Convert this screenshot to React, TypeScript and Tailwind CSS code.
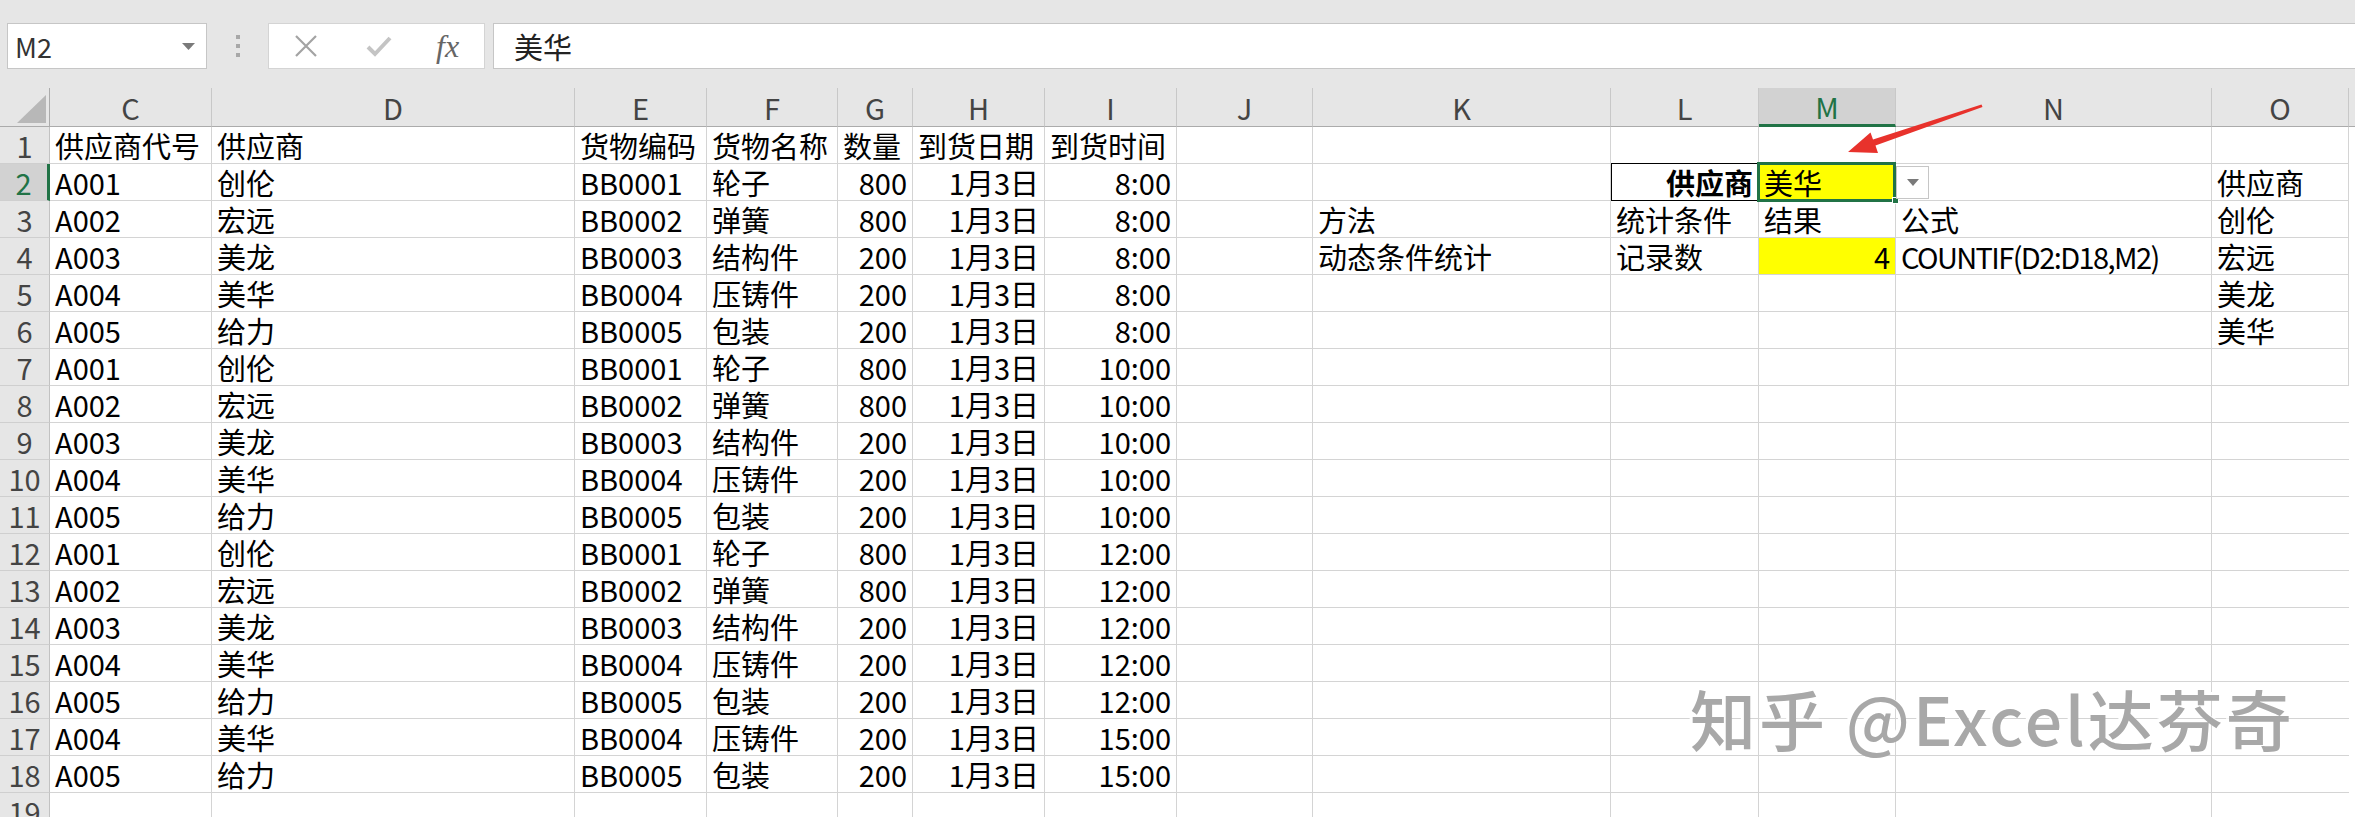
import React from "react";

type Col = { key: string; w: string };

const cols: Col[] = [
  { key: "C", w: "w-[162px]" },
  { key: "D", w: "w-[363px]" },
  { key: "E", w: "w-[132px]" },
  { key: "F", w: "w-[131px]" },
  { key: "G", w: "w-[75px]" },
  { key: "H", w: "w-[132px]" },
  { key: "I", w: "w-[132px]" },
  { key: "J", w: "w-[136px]" },
  { key: "K", w: "w-[298px]" },
  { key: "L", w: "w-[148px]" },
  { key: "M", w: "w-[137px]" },
  { key: "N", w: "w-[316px]" },
  { key: "O", w: "w-[137px]" },
];

const records: [string, string, string, string, string, string][] = [
  ["A001", "创伦", "BB0001", "轮子", "800", "8:00"],
  ["A002", "宏远", "BB0002", "弹簧", "800", "8:00"],
  ["A003", "美龙", "BB0003", "结构件", "200", "8:00"],
  ["A004", "美华", "BB0004", "压铸件", "200", "8:00"],
  ["A005", "给力", "BB0005", "包装", "200", "8:00"],
  ["A001", "创伦", "BB0001", "轮子", "800", "10:00"],
  ["A002", "宏远", "BB0002", "弹簧", "800", "10:00"],
  ["A003", "美龙", "BB0003", "结构件", "200", "10:00"],
  ["A004", "美华", "BB0004", "压铸件", "200", "10:00"],
  ["A005", "给力", "BB0005", "包装", "200", "10:00"],
  ["A001", "创伦", "BB0001", "轮子", "800", "12:00"],
  ["A002", "宏远", "BB0002", "弹簧", "800", "12:00"],
  ["A003", "美龙", "BB0003", "结构件", "200", "12:00"],
  ["A004", "美华", "BB0004", "压铸件", "200", "12:00"],
  ["A005", "给力", "BB0005", "包装", "200", "12:00"],
  ["A004", "美华", "BB0004", "压铸件", "200", "15:00"],
  ["A005", "给力", "BB0005", "包装", "200", "15:00"],
];

type Cell = {
  t: string;
  right?: boolean;
  bold?: boolean;
  yellow?: boolean;
  boxed?: boolean;
  selected?: boolean;
  tight?: boolean;
};

const extras: Record<string, Cell> = {
  L2: { t: "供应商", right: true, bold: true, boxed: true },
  M2: { t: "美华", yellow: true, selected: true },
  O2: { t: "供应商" },
  K3: { t: "方法" },
  L3: { t: "统计条件" },
  M3: { t: "结果" },
  N3: { t: "公式" },
  O3: { t: "创伦" },
  K4: { t: "动态条件统计" },
  L4: { t: "记录数" },
  M4: { t: "4", right: true, yellow: true },
  N4: { t: "COUNTIF(D2:D18,M2)", tight: true },
  O4: { t: "宏远" },
  O5: { t: "美龙" },
  O6: { t: "美华" },
};

function getCell(row: number, key: string): Cell | undefined {
  if (row === 1) {
    const head: Record<string, string> = {
      C: "供应商代号",
      D: "供应商",
      E: "货物编码",
      F: "货物名称",
      G: "数量",
      H: "到货日期",
      I: "到货时间",
    };
    if (head[key]) return { t: head[key] };
  }
  const r = records[row - 2];
  if (r) {
    const map: Record<string, Cell> = {
      C: { t: r[0] },
      D: { t: r[1] },
      E: { t: r[2] },
      F: { t: r[3] },
      G: { t: r[4], right: true },
      H: { t: "1月3日", right: true },
      I: { t: r[5], right: true },
    };
    if (map[key]) return map[key];
  }
  return extras[`${key}${row}`];
}

function FormulaBar() {
  return (
    <div className="flex h-[70px] items-start bg-[#e6e6e6] pt-[23px]">
      <div className="ml-[7px] flex h-[46px] w-[200px] items-center justify-between border border-[#c6c6c6] bg-white pl-[7px] pr-[11px]">
        <span className="text-[27px] leading-none text-[#333]">M2</span>
        <svg width="13" height="7" viewBox="0 0 13 7">
          <polygon points="0,0 13,0 6.5,7" fill="#7a7a7a" />
        </svg>
      </div>
      <div className="flex h-[46px] w-[61px] items-center justify-center">
        <svg width="4" height="22" viewBox="0 0 4 22">
          <rect x="0" y="0" width="4" height="4" fill="#a8a8a8" />
          <rect x="0" y="9" width="4" height="4" fill="#a8a8a8" />
          <rect x="0" y="18" width="4" height="4" fill="#a8a8a8" />
        </svg>
      </div>
      <div className="flex h-[46px] w-[217px] items-center border border-[#d4d4d4] bg-white">
        <svg className="ml-[25px]" width="24" height="22" viewBox="0 0 24 22">
          <path d="M2 1 L22 21 M22 1 L2 21" stroke="#a3a3a3" strokeWidth="2.2" fill="none" />
        </svg>
        <svg className="ml-[48px]" width="26" height="22" viewBox="0 0 26 22">
          <path d="M2 12 L9 19 L24 3" stroke="#c4c4c4" strokeWidth="4" fill="none" />
        </svg>
        <span className="ml-[44px] font-['Liberation_Serif',serif] text-[32px] italic leading-none text-[#666]">fx</span>
      </div>
      <div className="ml-[8px] flex h-[46px] flex-1 items-center border-y border-l border-[#c6c6c6] bg-white pl-[20px]">
        <span className="text-[29px] leading-none text-[#222]">美华</span>
      </div>
    </div>
  );
}

function HeaderRow() {
  return (
    <div className="flex h-[39px] bg-[#e6e6e6]">
      <div className="relative h-full w-[50px] shrink-0 border-b border-r border-[#ababab]">
        <svg className="absolute left-0 top-0" width="50" height="39" viewBox="0 0 50 39">
          <polygon points="46,7 46,35 17,35" fill="#b8b8b8" />
        </svg>
      </div>
      {cols.map((c) =>
        c.key === "M" ? (
          <div
            key={c.key}
            className={`${c.w} h-full shrink-0 border-b-[3px] border-r border-b-[#217346] border-r-[#c8c8c8] bg-[#d2d2d2] text-center leading-[37px] text-[#217346]`}
          >
            {c.key}
          </div>
        ) : (
          <div
            key={c.key}
            className={`${c.w} h-full shrink-0 border-b border-r border-b-[#ababab] border-r-[#c8c8c8] text-center leading-[38px] text-[#444]`}
          >
            {c.key}
          </div>
        ),
      )}
      <div className="h-full flex-1 border-b border-[#ababab]" />
    </div>
  );
}

function DataCell({ col, row }: { col: Col; row: number }) {
  const cell = getCell(row, col.key);
  const noRight = col.key === "O" && row > 7;
  const base = `${col.w} relative h-[37px] shrink-0 border-b border-[#d4d4d4] whitespace-nowrap leading-[36px] text-black`;
  const right = noRight ? "" : "border-r";
  const align = cell?.right ? "pr-[5px] text-right" : "pl-[5px]";
  const bg = cell?.yellow ? "bg-[#ffff00]" : "bg-white";
  const weight = cell?.bold ? "font-bold" : "";
  const track = cell?.tight ? "tracking-[-1.6px]" : "";
  return (
    <div className={`${base} ${right} ${align} ${bg} ${weight} ${track} ${cell?.selected ? "z-10" : ""}`}>
      {cell?.boxed && <div className="absolute inset-x-0 bottom-[-1px] top-[-1px] border border-black" />}
      <span className="relative">{cell?.t}</span>
      {cell?.selected && (
        <>
          <div className="absolute bottom-[-2px] left-[-2px] right-[-1px] top-[-2px] border-[3px] border-[#217346]" />
          <div className="absolute bottom-[-4px] right-[-4px] h-[7px] w-[7px] border border-white bg-[#217346]" />
          <div className="absolute left-[calc(100%+1px)] top-[2px] flex h-[33px] w-[33px] items-center justify-center border border-[#c6c6c6] bg-white">
            <svg width="12" height="7" viewBox="0 0 12 7">
              <polygon points="0,0 12,0 6,7" fill="#7a7a7a" />
            </svg>
          </div>
        </>
      )}
    </div>
  );
}

function Row({ row }: { row: number }) {
  const active = row === 2;
  return (
    <div className="flex h-[37px]">
      <div
        className={`h-[37px] w-[50px] shrink-0 border-b border-b-[#cfcfcf] text-center leading-[36px] ${
          active
            ? "border-r-[3px] border-r-[#217346] bg-[#d2d2d2] text-[#217346]"
            : "border-r border-r-[#c2c2c2] bg-[#e6e6e6] text-[#444]"
        }`}
      >
        {row}
      </div>
      {cols.map((c) => (
        <DataCell key={c.key} col={c} row={row} />
      ))}
      <div className="h-[37px] flex-1 bg-white" />
    </div>
  );
}

export default function App() {
  const rows = Array.from({ length: 19 }, (_, i) => i + 1);
  return (
    <div className="relative h-[817px] w-[2355px] overflow-hidden bg-white font-['Noto_Sans_CJK_SC',sans-serif] text-[29px]">
      <FormulaBar />
      <div className="h-[18px] bg-[#e6e6e6]" />
      <HeaderRow />
      {rows.map((r) => (
        <Row key={r} row={r} />
      ))}

      <svg className="pointer-events-none absolute left-0 top-0" width="2355" height="817" viewBox="0 0 2355 817">
        <polygon
          points="1848,152 1878,153 1875.5,145.5 1982.5,107 1981.5,104.5 1873,139.5 1870.5,132.5"
          fill="#e8322c"
        />
      </svg>

      <div className="pointer-events-none absolute left-[1690px] top-[684px] whitespace-nowrap text-[66px] font-medium leading-[66px] tracking-[3px] text-[#a8a8a8] [text-shadow:-3px_-3px_0_#ffffff]">
        知乎 @Excel达芬奇
      </div>
    </div>
  );
}
